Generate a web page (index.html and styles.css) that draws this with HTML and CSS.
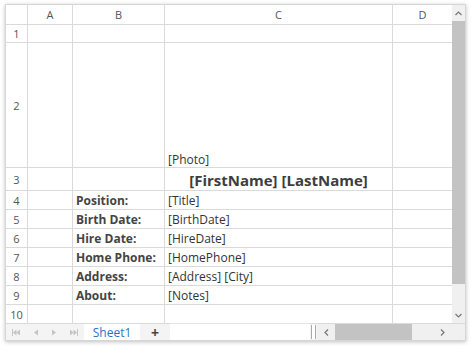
FILE: index.html
```html
<!DOCTYPE html>
<html lang="en">
<head>
    <meta charset="UTF-8">
    <title>Employee Card</title>
    <link rel="stylesheet" href="styles.css">
</head>
<body>
    <!-- Spreadsheet control -->
    <div class="sheet">
        <div class="sheet-main">
            <div class="grid">
                <div class="hdr corner"></div>
                <div class="hdr col">A</div>
                <div class="hdr col">B</div>
                <div class="hdr col">C</div>
                <div class="hdr col">D</div>

                <div class="hdr rowh">1</div><div class="cell"></div><div class="cell"></div><div class="cell"></div><div class="cell"></div>
                <div class="hdr rowh">2</div><div class="cell"></div><div class="cell"></div><div class="cell bottom">[Photo]</div><div class="cell"></div>
                <div class="hdr rowh">3</div><div class="cell"></div><div class="cell"></div><div class="cell title">[FirstName] [LastName]</div><div class="cell"></div>
                <div class="hdr rowh">4</div><div class="cell"></div><div class="cell label">Position:</div><div class="cell">[Title]</div><div class="cell"></div>
                <div class="hdr rowh">5</div><div class="cell"></div><div class="cell label">Birth Date:</div><div class="cell">[BirthDate]</div><div class="cell"></div>
                <div class="hdr rowh">6</div><div class="cell"></div><div class="cell label">Hire Date:</div><div class="cell">[HireDate]</div><div class="cell"></div>
                <div class="hdr rowh">7</div><div class="cell"></div><div class="cell label">Home Phone:</div><div class="cell">[HomePhone]</div><div class="cell"></div>
                <div class="hdr rowh">8</div><div class="cell"></div><div class="cell label">Address:</div><div class="cell">[Address] [City]</div><div class="cell"></div>
                <div class="hdr rowh">9</div><div class="cell"></div><div class="cell label">About:</div><div class="cell">[Notes]</div><div class="cell"></div>
                <div class="hdr rowh">10</div><div class="cell"></div><div class="cell"></div><div class="cell"></div><div class="cell"></div>
            </div>

            <!-- Vertical scrollbar -->
            <div class="vscroll">
                <div class="arrow">
                    <svg width="7" height="5" viewBox="0 0 7 5"><path d="M0.5 4 L3.5 1 L6.5 4" fill="none" stroke="#777" stroke-width="1.2"/></svg>
                </div>
                <div class="vthumb"></div>
                <div class="vtrack"></div>
                <div class="arrow">
                    <svg width="7" height="5" viewBox="0 0 7 5"><path d="M0.5 1 L3.5 4 L6.5 1" fill="none" stroke="#777" stroke-width="1.2"/></svg>
                </div>
            </div>
        </div>

        <!-- Tabs + horizontal scrollbar -->
        <div class="tabbar">
            <div class="tabnav">
                <svg width="8" height="7" viewBox="0 0 8 7"><rect x="0" y="0" width="1" height="7" fill="#c4c4c4"/><path d="M1 3.5 L4.5 0.5 V6.5Z M4.5 3.5 L8 0.5 V6.5Z" fill="#c4c4c4"/></svg>
                <svg width="4" height="7" viewBox="0 0 4 7"><path d="M0 3.5 L4 0.5 V6.5Z" fill="#c4c4c4"/></svg>
                <svg width="4" height="7" viewBox="0 0 4 7"><path d="M4 3.5 L0 0.5 V6.5Z" fill="#c4c4c4"/></svg>
                <svg width="8" height="7" viewBox="0 0 8 7"><path d="M3.5 3.5 L0 0.5 V6.5Z M7 3.5 L3.5 0.5 V6.5Z" fill="#c4c4c4"/><rect x="7" y="0" width="1" height="7" fill="#c4c4c4"/></svg>
            </div>
            <div class="tab active">Sheet1</div>
            <div class="tab add">+</div>
            <div class="tabfill"></div>
            <div class="splitter"></div>
            <div class="hscroll">
                <div class="harrow">
                    <svg width="5" height="7" viewBox="0 0 5 7"><path d="M4 0.5 L1 3.5 L4 6.5" fill="none" stroke="#777" stroke-width="1.2"/></svg>
                </div>
                <div class="hthumb"></div>
                <div class="htrack"></div>
                <div class="harrow">
                    <svg width="5" height="7" viewBox="0 0 5 7"><path d="M1 0.5 L4 3.5 L1 6.5" fill="none" stroke="#777" stroke-width="1.2"/></svg>
                </div>
            </div>
            <div class="scorner"></div>
        </div>
    </div>
</body>
</html>
```

FILE: styles.css
```css
body {
    margin: 0;
    padding: 4px 8px 8px 5px;
    background-color: #fff;
    font-family: "Open Sans", "Noto Sans", Arial, sans-serif;
}

/* Spreadsheet frame */
.sheet {
    width: 459px;
    border: 1px solid #d6d6d6;
    box-shadow: 0 1px 4px rgba(0, 0, 0, 0.25);
    display: flex;
    flex-direction: column;
}

.sheet-main {
    display: flex;
}

/* Cells grid: gaps act as gridlines */
.grid {
    display: grid;
    grid-template-columns: 21px 44px 91px 227px 59px;
    grid-template-rows: 19px 17px 124px 22px repeat(6, 18px) 18px;
    gap: 1px;
    background-color: #dadada;
}

.grid > div {
    background-color: #fff;
    font-size: 12px;
    color: #333;
    line-height: 18px;
    padding-top: 1px;
    box-sizing: border-box;
    white-space: nowrap;
    overflow: hidden;
}

.hdr {
    color: #555 !important;
    font-size: 11px !important;
    text-align: center;
}

.col {
    line-height: 19px !important;
    padding-top: 0 !important;
}

.rowh {
    display: flex;
    align-items: center;
    justify-content: center;
}

.cell {
    padding-left: 3px;
}

.bottom {
    display: flex;
    align-items: flex-end;
    line-height: 15px !important;
}

.title {
    text-align: center;
    font-weight: bold;
    font-size: 15px !important;
    color: #3d3d3d !important;
    line-height: 22px !important;
    padding-left: 0;
}

.label {
    font-weight: bold;
    color: #444 !important;
}

/* Vertical scrollbar */
.vscroll {
    width: 14px;
    background-color: #f0f0f0;
    display: flex;
    flex-direction: column;
}

.arrow {
    height: 16px;
    display: flex;
    align-items: center;
    justify-content: center;
}

.vthumb {
    height: 263px;
    background-color: #c3c3c3;
}

.vtrack {
    flex: 1;
}

/* Tab bar */
.tabbar {
    height: 16px;
    border-top: 1px solid #dadada;
    display: flex;
    background-color: #f4f4f4;
    font-size: 12px;
}

.tabnav {
    width: 78px;
    display: flex;
    align-items: center;
    gap: 14px;
    padding-left: 6px;
    box-sizing: border-box;
}

.tab {
    display: flex;
    align-items: center;
    justify-content: center;
}

.tab.active {
    width: 56px;
    background-color: #fff;
    color: #2b73c2;
}

.tab.add {
    width: 30px;
    font-weight: bold;
    font-size: 14px;
    color: #444;
}

.tabfill {
    flex: 1;
    background-color: #fff;
    border-top: 1px solid #e6e6e6;
    margin-top: -1px;
}

.splitter {
    width: 3px;
    margin: 1px 0 1px 1px;
    border-left: 1px solid #aaa;
    border-right: 1px solid #aaa;
    background-color: #fff;
}

.hscroll {
    width: 134px;
    margin-left: 1px;
    display: flex;
    background-color: #f0f0f0;
}

.harrow {
    width: 18px;
    display: flex;
    align-items: center;
    justify-content: center;
}

.hthumb {
    width: 77px;
    background-color: #c3c3c3;
}

.htrack {
    flex: 1;
}

.scorner {
    width: 14px;
    background-color: #f0f0f0;
}
```
